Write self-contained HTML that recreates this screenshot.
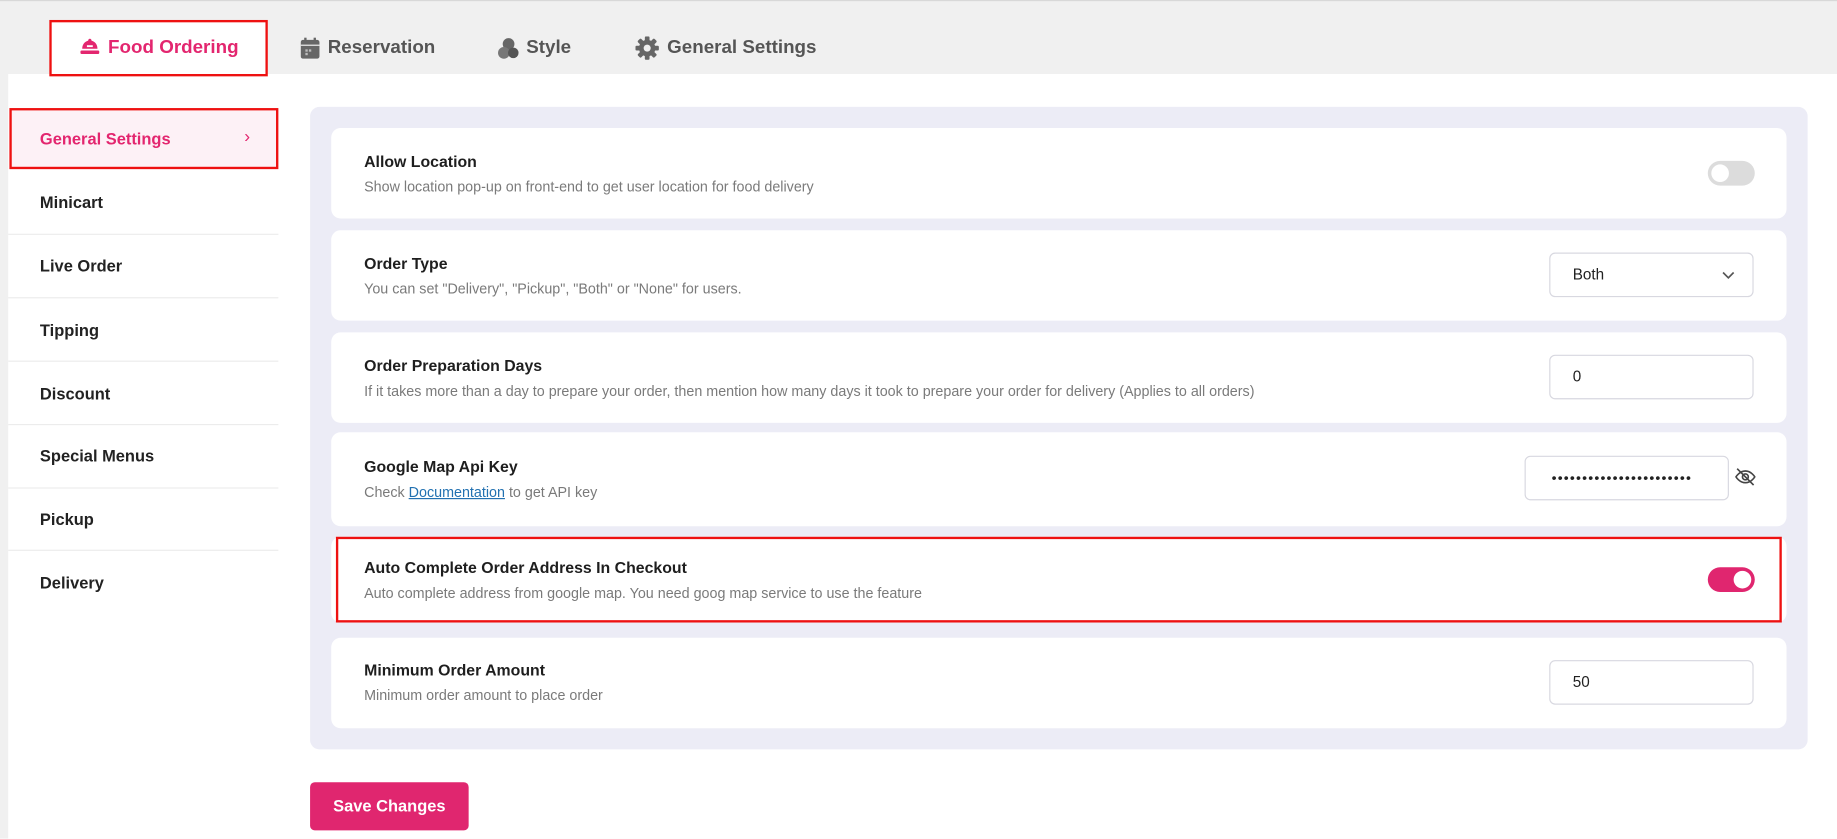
<!DOCTYPE html>
<html><head><meta charset="utf-8"><style>
*{box-sizing:border-box;margin:0;padding:0}
html,body{width:1837px;height:838px;overflow:hidden;background:#fff;font-family:"Liberation Sans",sans-serif}
#w{position:absolute;left:0;top:0;width:1564px;height:714px;transform:scale(1.17455);transform-origin:0 0;background:#f0f0f0}
.abs{position:absolute}
.hdr{left:0;top:0;width:1564px;height:63px;background:#f0f0f0;border-top:1px solid #d8d8d8}
.tab{position:absolute;top:31px;font-size:16px;font-weight:bold;color:#555;height:20px;line-height:20px;display:flex;align-items:center;gap:6px}
.si{position:absolute;left:27px;font-size:14px;font-weight:bold;color:#222}
.sep{position:absolute;left:7px;width:230px;height:1px;background:#ececec}
.panel{left:264px;top:91px;width:1275px;height:547px;background:#ececf6;border-radius:8px}
.card{position:absolute;left:282px;width:1239px;background:#fff;border-radius:8px}
.t{position:absolute;left:28px;font-size:13.5px;font-weight:bold;color:#1e1e1e}
.d{position:absolute;left:28px;font-size:12.2px;color:#7a7a7a;white-space:nowrap}
.inp{position:absolute;border:1px solid #d8d8e0;border-radius:5px;background:#fff;font-size:13px;color:#222;padding-left:19px;line-height:36px;height:38px}
.tog{position:absolute;width:40px;height:21px;border-radius:11px}
.tog i{position:absolute;top:3px;width:15px;height:15px;border-radius:50%;background:#fff}
</style></head><body><div id="w">
<div class="abs hdr"></div>
<div class="abs" style="left:7px;top:63px;width:1557px;height:651px;background:#fff"></div>
<div class="abs" style="left:42px;top:17px;width:186px;height:48px;background:#fff;border:2px solid #ee1111"></div>
<div class="tab" style="left:67px;color:#e3266f">
<svg width="19" height="18" viewBox="0 0 19 18"><path d="M9.5 1a1.4 1.4 0 0 1 1.4 1.6C14 3.4 16 6 16 9.5H3C3 6 5 3.4 8.1 2.6A1.4 1.4 0 0 1 9.5 1z" fill="#e3266f"/><rect x="7" y="6.5" width="5" height="1.6" fill="#fff"/><rect x="1.5" y="11" width="16" height="3" rx="1" fill="#e3266f"/></svg>
<span style="margin-left:0px">Food Ordering</span></div>
<div class="tab" style="left:256px"><svg width="16" height="18" viewBox="0 0 16 18"><rect x="3" y="0" width="2" height="4" fill="#666"/><rect x="11" y="0" width="2" height="4" fill="#666"/><rect x="0" y="2" width="16" height="16" rx="2" fill="#666"/><rect x="0" y="6" width="16" height="1" fill="#f0f0f0"/><rect x="4" y="10" width="2" height="2" fill="#bbb"/><rect x="4" y="13" width="2" height="2" fill="#bbb"/><rect x="7" y="10" width="2" height="2" fill="#bbb"/></svg><span style="margin-left:1px">Reservation</span></div>
<div class="tab" style="left:424px"><svg width="18" height="19" viewBox="0 0 18 19"><circle cx="9" cy="5.5" r="5" fill="#666"/><circle cx="5" cy="13" r="5" fill="#777"/><circle cx="13" cy="13" r="4.5" fill="#555"/></svg><span>Style</span></div>
<div class="tab" style="left:541px"><svg width="20" height="20" viewBox="0 0 20 20"><g fill="#666"><circle cx="10" cy="10" r="7"/><rect x="8" y="0" width="4" height="20" rx="1"/><rect x="0" y="8" width="20" height="4" rx="1"/><rect x="8" y="0" width="4" height="20" rx="1" transform="rotate(45 10 10)"/><rect x="8" y="0" width="4" height="20" rx="1" transform="rotate(-45 10 10)"/></g><circle cx="10" cy="10" r="3" fill="#f0f0f0"/></svg><span style="margin-left:1px">General Settings</span></div>

<div class="abs" style="left:8px;top:92px;width:229px;height:52px;background:#fdf1f6;border:2px solid #ee1111"></div>
<div class="si" style="left:34px;top:110px;color:#e3266f;font-weight:bold">General Settings</div>
<div class="abs" style="left:208px;top:108px;font-size:15px;color:#e3266f">›</div>
<div class="si" style="left:34px;top:164px">Minicart</div>
<div class="sep" style="top:199px"></div>
<div class="si" style="left:34px;top:218px">Live Order</div>
<div class="sep" style="top:253px"></div>
<div class="si" style="left:34px;top:273px">Tipping</div>
<div class="sep" style="top:307px"></div>
<div class="si" style="left:34px;top:327px">Discount</div>
<div class="sep" style="top:361px"></div>
<div class="si" style="left:34px;top:380px">Special Menus</div>
<div class="sep" style="top:415px"></div>
<div class="si" style="left:34px;top:434px">Pickup</div>
<div class="sep" style="top:468px"></div>
<div class="si" style="left:34px;top:488px">Delivery</div>

<div class="abs panel"></div>
<div class="card" style="top:109px;height:77px"><div class="t" style="top:21px">Allow Location</div><div class="d" style="top:43px">Show location pop-up on front-end to get user location for food delivery</div>
<div class="tog" style="left:1172px;top:28px;background:#dcdcdc"><i style="left:3px"></i></div></div>
<div class="card" style="top:196px;height:77px"><div class="t" style="top:21px">Order Type</div><div class="d" style="top:43px">You can set "Delivery", "Pickup", "Both" or "None" for users.</div>
<div class="inp" style="left:1037px;top:19px;width:174px">Both<svg style="position:absolute;right:15px;top:15px" width="11" height="7" viewBox="0 0 11 7"><path d="M1 1l4.5 4.5L10 1" stroke="#555" stroke-width="1.4" fill="none"/></svg></div></div>
<div class="card" style="top:283px;height:77px"><div class="t" style="top:21px">Order Preparation Days</div><div class="d" style="top:43px">If it takes more than a day to prepare your order, then mention how many days it took to prepare your order for delivery (Applies to all orders)</div>
<div class="inp" style="left:1037px;top:19px;width:174px">0</div></div>
<div class="card" style="top:368px;height:80px"><div class="t" style="top:22px">Google Map Api Key</div><div class="d" style="top:44px">Check <span style="color:#2271b1;text-decoration:underline">Documentation</span> to get API key</div>
<div class="inp" style="left:1016px;top:20px;width:174px;padding-left:22px;letter-spacing:1px;font-size:12px">•••••••••••••••••••••••</div>
<svg style="position:absolute;left:1195px;top:30px" width="18" height="16" viewBox="0 0 18 16"><path d="M1 8s3-5 8-5 8 5 8 5-3 5-8 5-8-5-8-5z" stroke="#444" stroke-width="1.4" fill="none"/><circle cx="9" cy="8" r="2.5" stroke="#444" stroke-width="1.4" fill="none"/><path d="M2 1l14 14" stroke="#444" stroke-width="1.4"/></svg></div>
<div class="card" style="top:457px;height:73px"><div class="t" style="top:19px">Auto Complete Order Address In Checkout</div><div class="d" style="top:41px">Auto complete address from google map. You need goog map service to use the feature</div>
<div class="tog" style="left:1172px;top:26px;background:#e0266f"><i style="left:22px"></i></div></div>
<div class="abs" style="left:286px;top:457px;width:1231px;height:73px;border:2px solid #ee1111"></div>
<div class="card" style="top:543px;height:77px"><div class="t" style="top:20px">Minimum Order Amount</div><div class="d" style="top:42px">Minimum order amount to place order</div>
<div class="inp" style="left:1037px;top:19px;width:174px">50</div></div>

<div class="abs" style="left:264px;top:666px;width:135px;height:41px;background:#e0266f;border-radius:4px;color:#fff;font-weight:bold;font-size:14px;line-height:41px;text-align:center">Save Changes</div>
</div></body></html>
